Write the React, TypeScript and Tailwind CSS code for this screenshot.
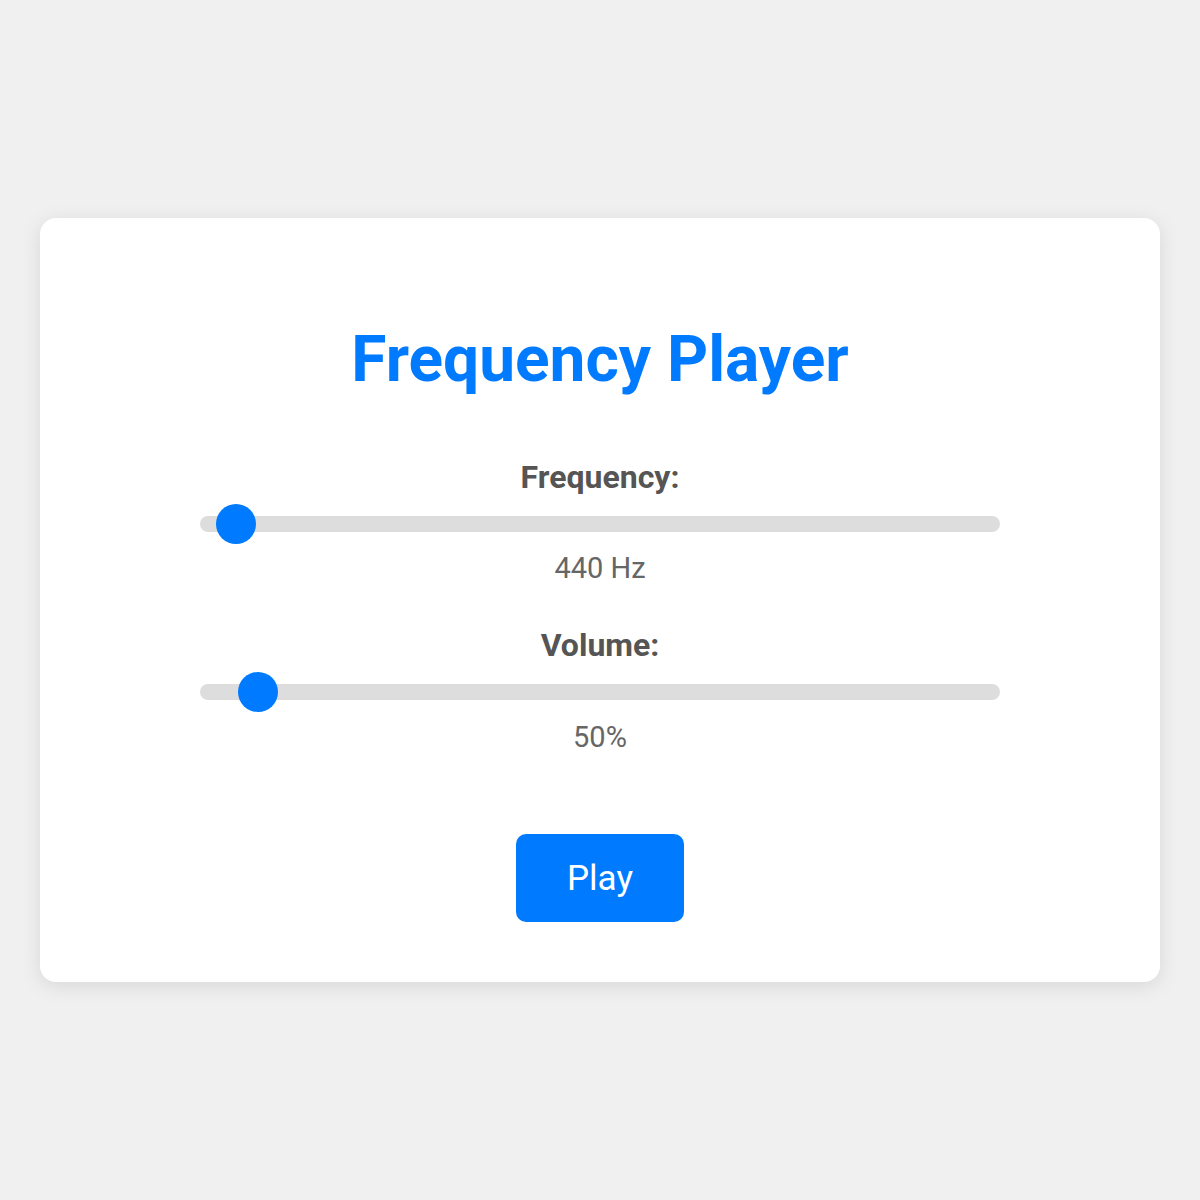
import { useState } from 'react';

interface SliderProps {
  value: number;
  min: number;
  max: number;
}

// plain track + thumb, thumb center runs 20px..780px along an 800px track
function Slider({ value, min, max }: SliderProps) {
  const frac = (value - min) / (max - min);
  const left = 20 + frac * 760;
  return (
    <div className="relative h-4 w-[800px] rounded-full bg-[#dddddd]">
      <div
        className="absolute top-1/2 h-10 w-10 -translate-x-1/2 -translate-y-1/2 rounded-full bg-[#007bff]"
        style={{ left: `${left}px` }}
      />
    </div>
  );
}

export default function App() {
  const [frequency] = useState(440);
  const [volume] = useState(50);

  return (
    <div
      className="flex min-h-[1200px] w-full items-start justify-center bg-[#f0f0f0] pt-[218px]"
      style={{ fontFamily: 'Roboto, "Liberation Sans", sans-serif' }}
    >
      <div className="flex w-[1120px] flex-col items-center rounded-2xl bg-white pb-[60px] pt-[110px] shadow-[0_4px_20px_rgba(0,0,0,0.1)]">
        <h1 className="text-[64px] font-bold leading-none text-[#007bff]">Frequency Player</h1>

        {/* Frequency */}
        <div className="mt-[69px] text-[32px] font-bold leading-none text-[#555555]">Frequency:</div>
        <div className="mt-[23px]">
          <Slider value={frequency} min={20} max={20000} />
        </div>
        <div className="mt-[22px] text-[29px] leading-none text-[#666666]">{frequency} Hz</div>

        {/* Volume */}
        <div className="mt-[46px] text-[32px] font-bold leading-none text-[#555555]">Volume:</div>
        <div className="mt-[23px]">
          <Slider value={volume} min={0} max={1000} />
        </div>
        <div className="mt-[23px] text-[29px] leading-none text-[#666666]">{volume}%</div>

        <button className="mt-[82px] flex h-[88px] w-[168px] items-center justify-center rounded-[10px] bg-[#007bff] text-[35px] leading-none text-white">
          Play
        </button>
      </div>
    </div>
  );
}
